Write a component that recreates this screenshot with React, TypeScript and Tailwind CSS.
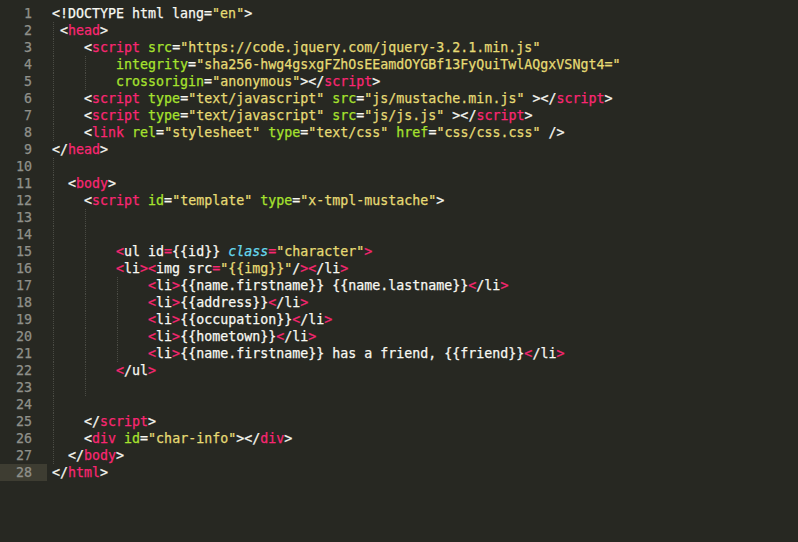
type Tok = [string, string];

// token colours (monokai)
const C: Record<string, string> = {
  w: "text-[#f8f8f2]",
  r: "text-[#f92672]",
  g: "text-[#a6e22e]",
  y: "text-[#e6db74]",
  c: "text-[#66d9ef] italic",
};

const w = (s: string): Tok => ["w", s];
const r = (s: string): Tok => ["r", s];
const g = (s: string): Tok => ["g", s];
const y = (s: string): Tok => ["y", s];
const c = (s: string): Tok => ["c", s];

const li = (inner: string): Tok[] => [
  w("            "),
  r("<"),
  w("li"),
  r(">"),
  w(inner),
  r("<"),
  w("/li"),
  r(">"),
];

// each line: tokens + indent guide columns
const lines: { toks: Tok[]; guides: number[] }[] = [
  { toks: [w("<!DOCTYPE html lang="), y('"en"'), w(">")], guides: [] },
  { toks: [w(" <"), r("head"), w(">")], guides: [0] },
  {
    toks: [w("    <"), r("script"), w(" "), g("src"), w("="), y('"https://code.jquery.com/jquery-3.2.1.min.js"')],
    guides: [0],
  },
  {
    toks: [w("        "), g("integrity"), w("="), y('"sha256-hwg4gsxgFZhOsEEamdOYGBf13FyQuiTwlAQgxVSNgt4="')],
    guides: [0, 4],
  },
  {
    toks: [w("        "), g("crossorigin"), w("="), y('"anonymous"'), w("></"), r("script"), w(">")],
    guides: [0, 4],
  },
  {
    toks: [w("    <"), r("script"), w(" "), g("type"), w("="), y('"text/javascript"'), w(" "), g("src"), w("="), y('"js/mustache.min.js"'), w(" ></"), r("script"), w(">")],
    guides: [0],
  },
  {
    toks: [w("    <"), r("script"), w(" "), g("type"), w("="), y('"text/javascript"'), w(" "), g("src"), w("="), y('"js/js.js"'), w(" ></"), r("script"), w(">")],
    guides: [0],
  },
  {
    toks: [w("    <"), r("link"), w(" "), g("rel"), w("="), y('"stylesheet"'), w(" "), g("type"), w("="), y('"text/css"'), w(" "), g("href"), w("="), y('"css/css.css"'), w(" />")],
    guides: [0],
  },
  { toks: [w("</"), r("head"), w(">")], guides: [] },
  { toks: [], guides: [0] },
  { toks: [w("  <"), r("body"), w(">")], guides: [0] },
  {
    toks: [w("    <"), r("script"), w(" "), g("id"), w("="), y('"template"'), w(" "), g("type"), w("="), y('"x-tmpl-mustache"'), w(">")],
    guides: [0],
  },
  { toks: [], guides: [0, 4] },
  { toks: [], guides: [0, 4] },
  {
    toks: [w("        "), r("<"), w("ul id"), r("="), w("{{id}} "), c("class"), r("="), y('"character"'), r(">")],
    guides: [0, 4],
  },
  {
    toks: [w("        "), r("<"), w("li"), r("><"), w("img src"), r("="), y('"{{img}}"'), w("/"), r("><"), w("/li"), r(">")],
    guides: [0, 4],
  },
  { toks: li("{{name.firstname}} {{name.lastname}}"), guides: [0, 4, 8] },
  { toks: li("{{address}}"), guides: [0, 4, 8] },
  { toks: li("{{occupation}}"), guides: [0, 4, 8] },
  { toks: li("{{hometown}}"), guides: [0, 4, 8] },
  { toks: li("{{name.firstname}} has a friend, {{friend}}"), guides: [0, 4, 8] },
  { toks: [w("        "), r("<"), w("/ul"), r(">")], guides: [0, 4] },
  { toks: [], guides: [0, 4] },
  { toks: [], guides: [0] },
  { toks: [w("    </"), r("script"), w(">")], guides: [0] },
  {
    toks: [w("    <"), r("div"), w(" "), g("id"), w("="), y('"char-info"'), w("></"), r("div"), w(">")],
    guides: [0],
  },
  { toks: [w("  </"), r("body"), w(">")], guides: [0] },
  { toks: [w("</"), r("html"), w(">")], guides: [] },
];

const guideLeft: Record<number, string> = {
  0: "left-[6px]",
  4: "left-[38px]",
  8: "left-[70px]",
};

export default function App() {
  const current = lines.length;
  return (
    <div
      className="w-[798px] h-[542px] bg-[#272822] overflow-hidden pt-[5px] text-[13.3px] leading-[17px] [-webkit-text-stroke-width:0.25px]"
      style={{ fontFamily: '"DejaVu Sans Mono", "Liberation Mono", monospace' }}
    >
      {lines.map((line, i) => {
        const n = i + 1;
        const active = n === current;
        return (
          <div key={n} className="flex h-[17px]">
            <div
              className={`w-[47px] shrink-0 pr-[15px] text-right text-[#8f908a] ${active ? "bg-[#3e3d32]" : ""}`}
            >
              {n}
            </div>
            <div className="relative flex-1 pl-[5px] whitespace-pre">
              {line.guides.map((col) => (
                <span
                  key={col}
                  className={`absolute top-0 h-[17px] w-px bg-[repeating-linear-gradient(to_bottom,#4a4b44_0px,#4a4b44_1px,transparent_1px,transparent_2px)] ${guideLeft[col]}`}
                />
              ))}
              {line.toks.map(([k, s], j) => (
                <span key={j} className={C[k]}>
                  {s}
                </span>
              ))}
            </div>
          </div>
        );
      })}
    </div>
  );
}
